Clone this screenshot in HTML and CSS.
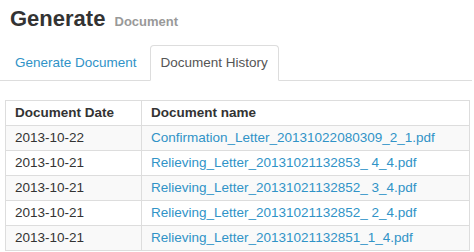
FILE: index.html
```html
<!DOCTYPE html>
<html lang="en">
<head>
    <meta charset="UTF-8">
    <meta name="viewport" content="width=device-width, initial-scale=1.0">
    <title>Generate Document</title>
    <link rel="stylesheet" href="styles.css">
</head>
<body>
    <h1 class="page-title">Generate <small>Document</small></h1>

    <ul class="nav-tabs">
        <li><a href="#">Generate Document</a></li>
        <li class="active"><a href="#">Document History</a></li>
    </ul>

    <table class="history-table">
        <thead>
            <tr>
                <th>Document Date</th>
                <th>Document name</th>
            </tr>
        </thead>
        <tbody>
            <tr>
                <td>2013-10-22</td>
                <td><a href="#">Confirmation_Letter_20131022080309_2_1.pdf</a></td>
            </tr>
            <tr>
                <td>2013-10-21</td>
                <td><a href="#">Relieving_Letter_20131021132853_ 4_4.pdf</a></td>
            </tr>
            <tr>
                <td>2013-10-21</td>
                <td><a href="#">Relieving_Letter_20131021132852_ 3_4.pdf</a></td>
            </tr>
            <tr>
                <td>2013-10-21</td>
                <td><a href="#">Relieving_Letter_20131021132852_ 2_4.pdf</a></td>
            </tr>
            <tr>
                <td>2013-10-21</td>
                <td><a href="#">Relieving_Letter_20131021132851_1_4.pdf</a></td>
            </tr>
        </tbody>
    </table>
</body>
</html>
```

FILE: styles.css
```css
body {
    font-family: "Liberation Sans", Arial, sans-serif;
    margin: 0;
    padding: 0;
    background-color: #fff;
    color: #333;
}

a {
    color: #3093c7;
    text-decoration: none;
}

.page-title {
    margin: 4px 0 0 10px;
    font-size: 22px;
    line-height: 30px;
    font-weight: bold;
    color: #333;
}

.page-title small {
    font-size: 13px;
    color: #999;
    font-weight: bold;
    margin-left: 3px;
}

.nav-tabs {
    display: flex;
    list-style: none;
    margin: 8px 2px 0 0;
    padding: 0 0 0 4px;
    border-bottom: 1px solid #ddd;
}

.nav-tabs li {
    margin-bottom: -1px;
    margin-right: 2px;
}

.nav-tabs a {
    display: block;
    padding: 8px 10px;
    font-size: 13.5px;
    line-height: 18px;
    border: 1px solid transparent;
    border-radius: 4px 4px 0 0;
}

.nav-tabs .active a {
    color: #555;
    background-color: #fff;
    border-color: #ddd #ddd transparent;
}

.history-table {
    margin: 19px 4px 0 5px;
    width: calc(100% - 9px);
    border-collapse: collapse;
    border: 1px solid #ddd;
    font-size: 13.5px;
}

.history-table th,
.history-table td {
    text-align: left;
    padding: 3px 9px;
    line-height: 18px;
    border: 1px solid #ddd;
}

.history-table th {
    font-weight: bold;
    color: #333;
}

.history-table th:first-child {
    width: 117px;
}

.history-table tbody tr:nth-child(odd) {
    background-color: #f9f9f9;
}
```
